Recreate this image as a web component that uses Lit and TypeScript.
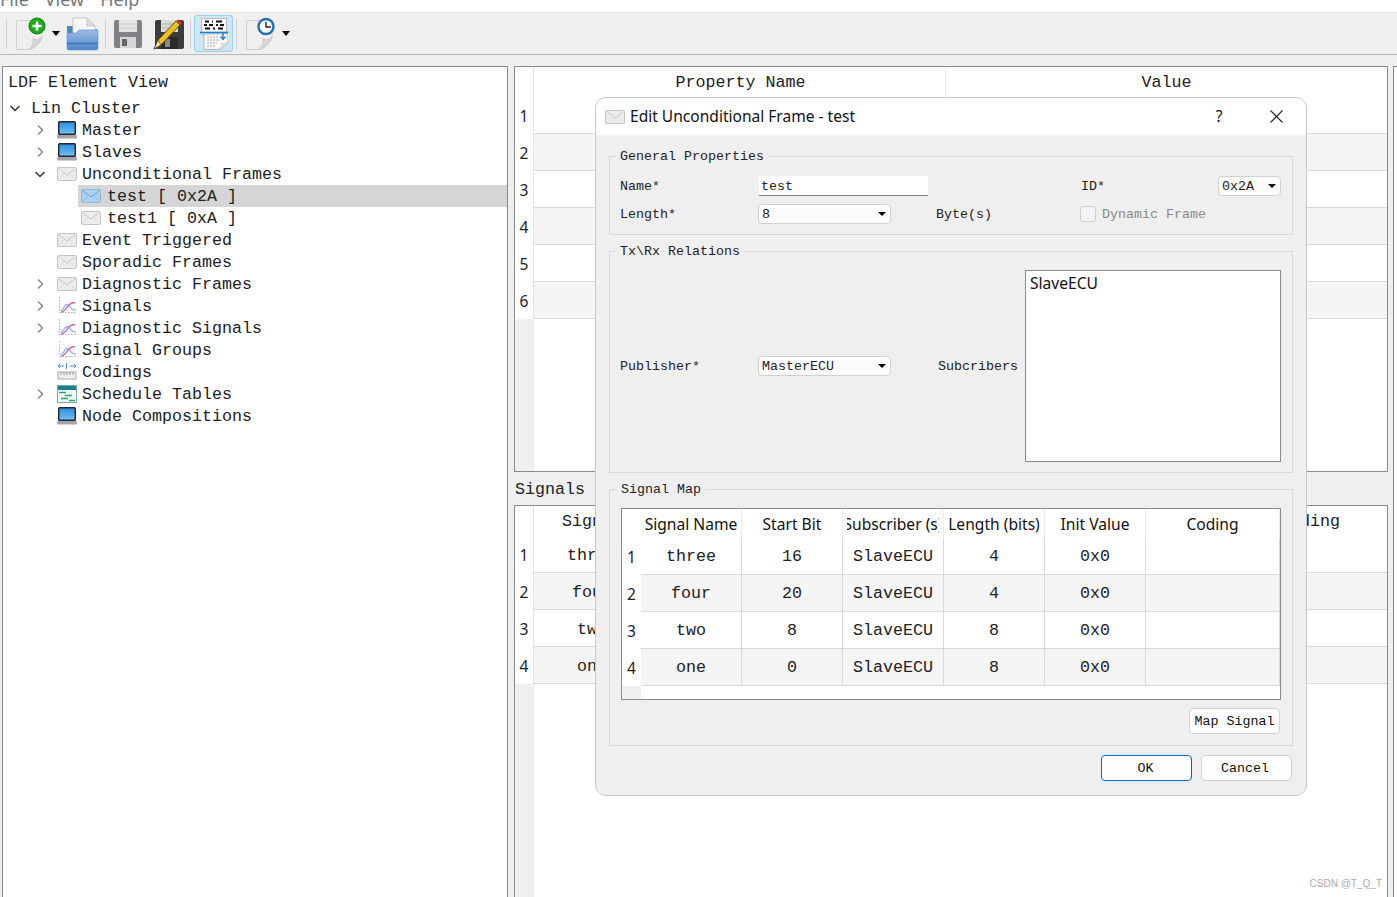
import { LitElement, html, css } from "lit";
import { customElement } from "lit/decorators.js";

const envelope = (blue = false) => html`<svg class="ic" width="20" height="16" viewBox="0 0 20 16">
  <rect x=".5" y="1.5" width="19" height="13" rx="1" fill="${blue ? "#a9d2f2" : "#ececec"}" stroke="${blue ? "#8fb8d8" : "#c4c4c4"}"/>
  <path d="M1 14 7.5 7.5M19 14 12.5 7.5" fill="none" stroke="${blue ? "#8fbde0" : "#dcdcdc"}"/>
  <path d="M1.500 2.500 10 9 18.500 2.500" fill="none" stroke="${blue ? "#6f9fc8" : "#c6c6c6"}"/>
</svg>`;

const monitor = () => html`<svg class="ic" width="20" height="18" viewBox="0 0 20 18">
  <defs><linearGradient id="scr" x1="0" y1="0" x2="0" y2="1"><stop offset="0" stop-color="#2d8fe0"/><stop offset="1" stop-color="#6ec0f5"/></linearGradient></defs>
  <rect x="1" y="0" width="18" height="14" rx="1.500" fill="#23272e"/>
  <rect x="2.500" y="1.500" width="15" height="11" fill="url(#scr)"/>
  <rect x="0" y="14" width="20" height="3.500" rx="1" fill="#a2a6ac"/>
</svg>`;

const chart = () => html`<svg class="ic" width="20" height="18" viewBox="0 0 20 18">
  <path d="M2.500 0V15.500H19" fill="none" stroke="#c0c0c0" stroke-dasharray="2 1"/>
  <path d="M4 14C7 12 8 6 11 8S15 14 19 13" fill="none" stroke="#8fc0ea" stroke-width="1.500"/>
  <path d="M4 15C8 15 10 10 12 8S16 5 18 6" fill="none" stroke="#d464b0" stroke-width="1.500"/>
</svg>`;

const coding = () => html`<svg class="ic" width="20" height="18" viewBox="0 0 20 18">
  <path d="M1 3H7M1 3 3 1M1 3 3 5M13 3H19M19 3 17 1M19 3 17 5M9.500 0V6" fill="none" stroke="#4a90d9"/>
  <rect x="1" y="9" width="18" height="7" fill="#eee" stroke="#aaa"/>
  <path d="M4 9V12M7 9V12M10 9V12M13 9V12M16 9V12" stroke="#999"/>
</svg>`;

const schedule = () => html`<svg class="ic" width="20" height="18" viewBox="0 0 20 18">
  <rect x=".5" y=".5" width="19" height="17" fill="#f4f8f8" stroke="#7aa"/>
  <rect x="1" y="1" width="18" height="4" fill="#1b7f8c"/>
  <path d="M2 7.500H9M8 10.500H15M4 13.500H11M12 15.500H18" stroke="#2aa56a" stroke-width="1.600"/>
</svg>`;

const pageDefs = html`<defs><linearGradient id="pg" x1="0" y1="0" x2="1" y2="1"><stop offset="0" stop-color="#ffffff"/><stop offset="1" stop-color="#e4e4e4"/></linearGradient></defs>`;

const newDoc = () => html`<svg class="tb" width="30" height="34" viewBox="0 0 30 34">
  ${pageDefs}
  <path d="M.5 3.500H26V20C24 26 19 31 13 32.500H.5Z" fill="url(#pg)" stroke="#cfcfcf"/>
  <path d="M13 32.500C17 28 18 25 16.500 21.500C20 23.500 23 23 26 20C24 26 19 31 13 32.500Z" fill="#d6d6d6" stroke="#bdbdbd" stroke-width=".6"/>
  <circle cx="21" cy="9" r="8" fill="#1eaa1e" stroke="#0d7d0d"/>
  <path d="M21 4.500V13.500M16.500 9H25.500" stroke="#fff" stroke-width="2.600"/>
</svg>`;

const openDoc = () => html`<svg class="tb" width="33" height="34" viewBox="0 0 33 34">
  <defs><linearGradient id="fo" x1="0" y1="0" x2="0" y2="1"><stop offset="0" stop-color="#9dbde6"/><stop offset="1" stop-color="#4f86c6"/></linearGradient></defs>
  <path d="M1 9H11L13 12H31V20H1Z" fill="#4f86c6"/>
  <path d="M7 1H21L29 9V18H7Z" fill="#f6f6f6" stroke="#c8c8c8"/>
  <path d="M21 1V9H29Z" fill="#dcdcdc" stroke="#bbb" stroke-width=".6"/>
  <path d="M1 16H10L13 13H32V31Q32 33 30 33H3Q1 33 1 31Z" fill="url(#fo)" stroke="#5d8cc4" stroke-width=".6"/>
  <path d="M1 26.500H32" stroke="#3d72b0" stroke-width="1.400"/>
</svg>`;

const floppy = () => html`<svg class="tb" width="28" height="28" viewBox="0 0 28 28">
  <rect width="28" height="28" rx="2" fill="#808285"/>
  <rect x="5" y="0" width="18" height="12" fill="#e4e4e4"/>
  <path d="M6 4H22M6 8H22" stroke="#c4c4c4"/>
  <rect x="6" y="17" width="16" height="11" fill="#d6d6d6"/>
  <rect x="8" y="19" width="5" height="7" fill="#666"/>
</svg>`;

const floppyEdit = () => html`<svg class="tb" width="32" height="32" viewBox="0 0 32 32">
  <rect x="3" y="2" width="29" height="29" rx="2" fill="#3a3c40"/>
  <rect x="9" y="2" width="17" height="12" fill="#dcdcdc"/>
  <path d="M10 6H25M10 10H25" stroke="#b0b0b0"/>
  <rect x="9" y="19" width="17" height="12" fill="#2a2a2a"/>
  <rect x="13" y="21" width="5" height="8" fill="#888"/>
  <path d="M2 31 6 22 24 3 28 7 9 27Z" fill="#f0c020" stroke="#3a2d00" stroke-width=".8"/>
  <path d="M24 3 28 7 30 5 26.500 1.500Z" fill="#d83020"/>
  <path d="M2 31 6 22 9 27Z" fill="#f4dcb0" stroke="#3a2d00" stroke-width=".6"/>
</svg>`;

const tableDoc = () => html`<svg class="tb" width="28" height="32" viewBox="0 0 28 32">
  <rect x="1.500" y=".5" width="25" height="16" fill="#f7f7f7" stroke="#bbb"/>
  <path d="M5 3.500H9M12 3.500H13M16 3.500H22M4 7H7M9 7H13M16 7H18M20 7H24M5 10.500H10M13 10.500H15M18 10.500H23" stroke="#111" stroke-width="2"/>
  <path d="M4 16H28V24C26 28 23 30 19 31.500H4Z" fill="#fafafa" stroke="#b5b5b5"/>
  <path d="M7 19H18M7 22H20M7 25H17M7 28H15" stroke="#aaa" stroke-dasharray="2 1"/>
  <path d="M19 31.500C22 28 22 27 21 25C24 26 26 26 28 24C26 28 23 30 19 31.500Z" fill="#ddd" stroke="#bbb" stroke-width=".5"/>
  <path d="M0 14.500H28" stroke="#1a7fd0" stroke-width="1.600"/>
  <path d="M23 15V21M20.500 18.500 23 21.500 25.500 18.500" fill="none" stroke="#1a7fd0" stroke-width="1.300"/>
</svg>`;

const clockDoc = () => html`<svg class="tb" width="30" height="34" viewBox="0 0 30 34">
  ${pageDefs}
  <path d="M.5 3.500H26V20C24 26 19 31 13 32.500H.5Z" fill="url(#pg)" stroke="#cfcfcf"/>
  <path d="M13 32.500C17 28 18 25 16.500 21.500C20 23.500 23 23 26 20C24 26 19 31 13 32.500Z" fill="#d6d6d6" stroke="#bdbdbd" stroke-width=".6"/>
  <circle cx="20" cy="9.500" r="7.500" fill="#fff" stroke="#1e6eb4" stroke-width="2.400"/>
  <path d="M20 5V10H25" fill="none" stroke="#222" stroke-width="1.400"/>
</svg>`;

type TreeItem = { label: string; level: 0 | 1 | 2; chev?: "r" | "d"; icon?: () => unknown; selected?: boolean };

const tree: TreeItem[] = [
  { label: "Lin Cluster", level: 0, chev: "d" },
  { label: "Master", level: 1, chev: "r", icon: monitor },
  { label: "Slaves", level: 1, chev: "r", icon: monitor },
  { label: "Unconditional Frames", level: 1, chev: "d", icon: () => envelope() },
  { label: "test [ 0x2A ]", level: 2, icon: () => envelope(true), selected: true },
  { label: "test1 [ 0xA ]", level: 2, icon: () => envelope() },
  { label: "Event Triggered", level: 1, icon: () => envelope() },
  { label: "Sporadic Frames", level: 1, icon: () => envelope() },
  { label: "Diagnostic Frames", level: 1, chev: "r", icon: () => envelope() },
  { label: "Signals", level: 1, chev: "r", icon: chart },
  { label: "Diagnostic Signals", level: 1, chev: "r", icon: chart },
  { label: "Signal Groups", level: 1, icon: chart },
  { label: "Codings", level: 1, icon: coding },
  { label: "Schedule Tables", level: 1, chev: "r", icon: schedule },
  { label: "Node Compositions", level: 1, icon: monitor },
];

const signals = [
  ["three", "16", "SlaveECU", "4", "0x0", ""],
  ["four", "20", "SlaveECU", "4", "0x0", ""],
  ["two", "8", "SlaveECU", "8", "0x0", ""],
  ["one", "0", "SlaveECU", "8", "0x0", ""],
];

const chevron = (d?: "r" | "d") =>
  html`<span class="chev">${d === "r"
    ? html`<svg width="12" height="12" viewBox="0 0 12 12"><path d="M4 1.500 8.500 6 4 10.500" fill="none" stroke="#8a8a8a" stroke-width="1.500"/></svg>`
    : d === "d"
    ? html`<svg width="12" height="12" viewBox="0 0 12 12"><path d="M1.500 4 6 8.500 10.500 4" fill="none" stroke="#333" stroke-width="1.500"/></svg>`
    : ""}</span>`;

@customElement("app-root")
export class AppRoot extends LitElement {
  static styles = css`
    :host {
      display: flex;
      flex-direction: column;
      position: relative;
      width: 1397px;
      height: 897px;
      overflow: hidden;
      background: #efefef;
      font-family: "Liberation Mono", monospace;
      font-size: 16.67px;
      color: #222;
    }
    svg { display: block; flex: none; }

    .menubar {
      height: 12px;
      flex: none;
      background: #fff;
      border-bottom: 1px solid #e6e6e6;
      overflow: hidden;
      display: flex;
      align-items: flex-end;
      gap: 16px;
      font-family: "Noto Sans", sans-serif;
      font-size: 18px;
      line-height: 12px;
      color: #777;
    }
    .menubar span { transform: translateY(-7px); }
    .toolbar {
      height: 42px;
      flex: none;
      box-sizing: border-box;
      border-bottom: 1px solid #b9b9b9;
      display: flex;
      align-items: center;
      padding-left: 6px;
    }
    .sep { width: 1px; height: 30px; background: #d0d0d0; flex: none; }
    .arrow {
      flex: none;
      width: 0;
      height: 0;
      border-left: 4.500px solid transparent;
      border-right: 4.500px solid transparent;
      border-top: 5px solid #000;
    }
    .m3 { margin-left: 3px; }
    .m6 { margin-left: 6px; }
    .m8 { margin-left: 8px; }
    .m9 { margin-left: 9px; }
    .m10 { margin-left: 10px; }
    .active {
      flex: none;
      box-sizing: border-box;
      width: 39px;
      height: 37px;
      background: #cde6f8;
      border: 1px solid #99d1f5;
      border-radius: 3px;
      display: flex;
      align-items: center;
      justify-content: center;
    }

    .content {
      flex: none;
      height: 850px;
      margin-top: 11px;
      padding-left: 2px;
      display: flex;
      gap: 6px;
    }
    .tree {
      box-sizing: border-box;
      width: 506px;
      flex: none;
      background: #fff;
      border: 1px solid #868b94;
    }
    .tree-head { height: 30px; display: flex; align-items: center; padding-left: 5px; }
    .row { height: 22px; display: flex; align-items: center; white-space: pre; }
    .chev { width: 12px; height: 12px; flex: none; }
    .l0 { padding-left: 6px; }
    .l0 .label { margin-left: 10px; }
    .l1 { padding-left: 31px; }
    .l1 .ic { margin-left: 11px; }
    .l1 .label { margin-left: 5px; }
    .l2 { margin-left: 75px; padding-left: 3px; }
    .l2 .chev { display: none; }
    .l2 .label { margin-left: 6px; }
    .sel { background: #d5d5d5; }

    .center {
      width: 874px;
      flex: none;
      display: flex;
      flex-direction: column;
    }
    .sheet {
      box-sizing: border-box;
      background: #fff;
      border: 1px solid #868b94;
      display: grid;
      overflow: hidden;
    }
    .sheet > div {
      display: flex;
      align-items: center;
      justify-content: center;
      white-space: nowrap;
      overflow: hidden;
      box-sizing: border-box;
      min-width: 0;
    }
    .props { height: 406px; flex: none; grid-template-columns: 19px 412px 441px; grid-template-rows: 30px repeat(6, 37px) 1fr; }
    .props .pn { padding-left: 2px; }
    .map { flex: 1; min-height: 0; grid-template-columns: 19px 117px 146px 146px 145px 145px 154px; grid-template-rows: 30px repeat(4, 37px) 1fr; }
    .map .c { padding-top: 2px; }
    .signals-label { height: 33px; box-sizing: border-box; flex: none; display: flex; align-items: center; padding: 2px 0 0 1px; }
    .hc { border-right: 1px solid #ececec; }
    .hc.last { border-right: 0; }
    .rh {
      font-family: "Noto Sans", sans-serif;
      font-size: 15.6px;
      border-right: 1px solid #e2e2e2;
    }
    .c { border-bottom: 1px solid #d9d9d9; border-right: 1px solid #d9d9d9; }
    .c.last { border-right: 0; }
    .alt { background: #f5f5f5; }
    .rh-fill { background: #f0f0f0; }
    .span-all { grid-column: 2 / -1; }
    .right-panel {
      flex: 1;
      margin-left: -1px;
      background: #fff;
      border: 1px solid #868b94;
      border-right: 0;
    }

    .dialog {
      position: absolute;
      left: 595px;
      top: 97px;
      box-sizing: border-box;
      width: 712px;
      height: 699px;
      background: #efefef;
      border: 1px solid #c9c9c9;
      border-radius: 11px;
      overflow: hidden;
      font-size: 13.33px;
    }
    .title {
      height: 37px;
      box-sizing: border-box;
      background: #fff;
      display: flex;
      align-items: center;
      padding-left: 9px;
      font-family: "Noto Sans", sans-serif;
      font-size: 15.55px;
      color: #111;
    }
    .title .ttl { margin-left: 5px; flex: 1; padding-bottom: 2px; }
    .title .help { width: 16px; text-align: center; margin-right: 43px; padding-bottom: 2px; }
    .title .close { margin-right: 23px; }
    .dlg-body { padding: 13px 13px 0; }
    fieldset {
      margin: 0;
      min-width: 0;
      box-sizing: border-box;
      border: 1px solid #d8d8d8;
      padding: 12px 10px 10px;
    }
    fieldset + fieldset { margin-top: 8px; }
    legend { padding: 0 4px; margin-left: -4px; line-height: 18px; height: 16px; }
    .general {
      display: grid;
      grid-template-columns: 139px 177px 145px 137px 63px;
      grid-template-rows: 20px 20px;
      row-gap: 8px;
      align-items: center;
    }
    .input {
      box-sizing: border-box;
      width: 169px;
      height: 20px;
      background: #fff;
      border-bottom: 1px solid #808080;
      padding: 1px 0 0 2px;
      display: flex;
      align-items: center;
    }
    .combo {
      box-sizing: border-box;
      height: 20px;
      background: #fcfcfc;
      border: 1px solid #d0d0d0;
      border-radius: 4px;
      display: flex;
      align-items: center;
      justify-content: space-between;
      padding: 0 3px 0 3px;
    }
    .combo .arrow { border-left-width: 4px; border-right-width: 4px; border-top-width: 4px; margin-right: 1px; }
    .w132 { width: 133px; margin-left: -1px; }
    .disabled { display: flex; align-items: center; color: #8a8a8a; margin-left: -1px; }
    .check {
      box-sizing: border-box;
      width: 16px;
      height: 16px;
      background: #f3f3f3;
      border: 1px solid #cfcfcf;
      border-radius: 3px;
      margin-right: 6px;
    }
    .relations {
      padding: 11px 11px 10px 10px;
    }
    .rel-grid {
      display: grid;
      grid-template-columns: 139px 179px 87px 256px;
      align-items: center;
    }
    .list {
      box-sizing: border-box;
      height: 192px;
      background: #fff;
      border: 1px solid #868b94;
      padding: 2px 4px;
      font-family: "Noto Sans", sans-serif;
      font-size: 15.6px;
      color: #111;
      line-height: 20px;
    }
    .sigmap { padding: 11px 11px 11px; }
    .inner {
      height: 192px;
      width: 660px;
      font-size: 16.67px;
      grid-template-columns: 19px repeat(5, 101px) 134px;
      grid-template-rows: 29px repeat(4, 37px) 1fr;
    }
    .inner .hc { font-family: "Noto Sans", sans-serif; font-size: 15.6px; color: #111; }
    .inner .hc span { display: flex; justify-content: center; width: 92px; overflow: hidden; }
    .inner .rh { border-right: 0; }
    .actions { display: flex; justify-content: flex-end; }
    .btn {
      box-sizing: border-box;
      height: 26px;
      background: #fdfdfd;
      border: 1px solid #d2d2d2;
      border-radius: 4px;
      display: flex;
      align-items: center;
      justify-content: center;
      color: #111;
      padding-top: 1px;
    }
    .map-btn { width: 91px; margin: 8px 1px 0 0; }
    .foot { margin-top: 9px; gap: 9px; padding-right: 1px; }
    .foot .btn { width: 91px; }
    .ok { border: 1px solid #0067c0; padding-right: 2px; }
    .cancel { padding-right: 3px; }

    .mark {
      position: absolute;
      right: 15px;
      bottom: 8px;
      font-family: "Liberation Sans", sans-serif;
      font-size: 10px;
      color: #aaa;
    }
  `;

  render() {
    return html`
      <div class="menubar"><span>File</span><span>View</span><span>Help</span></div>
      <div class="toolbar">
        <span class="sep"></span>
        <span class="m9">${newDoc()}</span>
        <span class="arrow m6"></span>
        <span class="m6">${openDoc()}</span>
        <span class="sep m6"></span>
        <span class="m8">${floppy()}</span>
        <span class="m10">${floppyEdit()}</span>
        <span class="sep m6"></span>
        <span class="active m3">${tableDoc()}</span>
        <span class="sep m3"></span>
        <span class="m9">${clockDoc()}</span>
        <span class="arrow m6"></span>
      </div>
      <div class="content">
        <div class="tree">
          <div class="tree-head">LDF Element View</div>
          ${tree.map(
            (t) => html`<div class="row l${t.level} ${t.selected ? "sel" : ""}">
              ${chevron(t.chev)}${t.icon ? t.icon() : ""}<span class="label">${t.label}</span>
            </div>`
          )}
        </div>
        <div class="center">
          <div class="sheet props">
            <div class="rh"></div><div class="hc pn">Property Name</div><div class="hc last">Value</div>
            ${[1, 2, 3, 4, 5, 6].map(
              (n) => html`<div class="rh">${n}</div>
                <div class="c ${n % 2 ? "" : "alt"}"></div>
                <div class="c last ${n % 2 ? "" : "alt"}"></div>`
            )}
            <div class="rh-fill"></div><div class="span-all"></div>
          </div>
          <div class="signals-label">Signals</div>
          <div class="sheet map">
            <div class="rh"></div>
            ${["Signal", "", "", "", "", "Coding"].map(
              (h, i) => html`<div class="hc ${i === 5 ? "last" : ""}">${h}</div>`
            )}
            ${signals.map(
              (r, n) => html`<div class="rh">${n + 1}</div>
                ${r.map((v, i) => html`<div class="c ${i === 5 ? "last" : ""} ${n % 2 ? "alt" : ""}">${i === 0 ? v : ""}</div>`)}`
            )}
            <div class="rh-fill"></div><div class="span-all"></div>
          </div>
        </div>
        <div class="right-panel"></div>
      </div>

      <div class="dialog">
        <div class="title">
          ${envelope()}
          <span class="ttl">Edit Unconditional Frame - test</span>
          <span class="help">?</span>
          <svg class="close" width="13" height="13" viewBox="0 0 13 13"><path d="M.5 .5 12.500 12.500M12.500 .5 .5 12.500" stroke="#222" stroke-width="1.100"/></svg>
        </div>
        <div class="dlg-body">
          <fieldset>
            <legend>General Properties</legend>
            <div class="general">
              <span>Name*</span>
              <div class="input">test</div>
              <span></span>
              <span>ID*</span>
              <div class="combo"><span>0x2A</span><span class="arrow"></span></div>
              <span>Length*</span>
              <div class="combo w132"><span>8</span><span class="arrow"></span></div>
              <span>Byte(s)</span>
              <div class="disabled"><span class="check"></span>Dynamic Frame</div>
              <span></span>
            </div>
          </fieldset>
          <fieldset class="relations">
            <legend>Tx\\Rx Relations</legend>
            <div class="rel-grid">
              <span>Publisher*</span>
              <div class="combo w132"><span>MasterECU</span><span class="arrow"></span></div>
              <span>Subcribers</span>
              <div class="list">SlaveECU</div>
            </div>
          </fieldset>
          <fieldset class="sigmap">
            <legend>Signal Map</legend>
            <div class="sheet inner">
              <div class="rh"></div>
              ${["Signal Name", "Start Bit", "Subscriber (s)", "Length (bits)", "Init Value", "Coding"].map(
                (h) => html`<div class="hc"><span>${h}</span></div>`
              )}
              ${signals.map(
                (r, n) => html`<div class="rh">${n + 1}</div>
                  ${r.map((v) => html`<div class="c ${n % 2 ? "alt" : ""}">${v}</div>`)}`
              )}
              <div class="rh-fill"></div><div class="span-all"></div>
            </div>
            <div class="actions"><div class="btn map-btn">Map Signal</div></div>
          </fieldset>
          <div class="actions foot">
            <div class="btn ok">OK</div>
            <div class="btn cancel">Cancel</div>
          </div>
        </div>
      </div>
      <div class="mark">CSDN @T_Q_T</div>
    `;
  }
}
